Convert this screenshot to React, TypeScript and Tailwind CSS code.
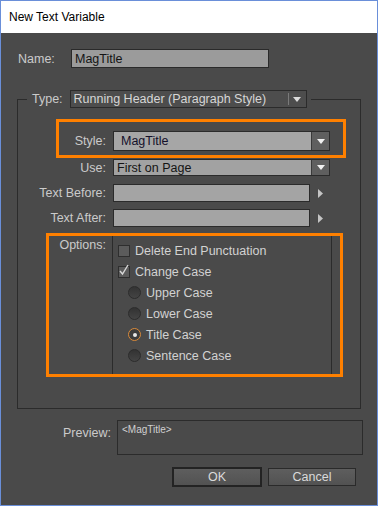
import React from 'react';

const font = { fontFamily: '"Liberation Sans", Arial, sans-serif' };

const Arrow = ({ className = '' }: { className?: string }) => (
  <svg width="8" height="5" viewBox="0 0 8 5" className={className}>
    <path d="M0 0 H8 L4 5 Z" fill="currentColor" />
  </svg>
);

const RightArrow = () => (
  <svg width="5" height="9" viewBox="0 0 5 9" className="ml-[8px] text-[#c4c4c4]">
    <path d="M0 0 L5 4.5 L0 9 Z" fill="currentColor" />
  </svg>
);

const Label = ({ children }: { children: React.ReactNode }) => (
  <div className="w-[88px] shrink-0 text-right text-[12.5px] leading-[16px] text-[#cbcbcb]">{children}</div>
);

const Checkbox = ({ checked, label }: { checked?: boolean; label: string }) => (
  <div className="flex h-[21px] items-center">
    <div className="relative h-[12px] w-[12px] border border-[#2e2e2e] bg-[#5b5b5b]">
      {checked && (
        <svg width="12" height="12" viewBox="0 0 12 12" className="absolute -left-[1px] -top-[3px]">
          <path d="M2 7 L4.5 10 L10 1" stroke="#d8d8d8" strokeWidth="1.4" fill="none" />
        </svg>
      )}
    </div>
    <span className="ml-[5px] text-[12.5px] leading-[16px] text-[#d2d2d2]">{label}</span>
  </div>
);

const Radio = ({ selected, label }: { selected?: boolean; label: string }) => (
  <div className="flex h-[21px] items-center pl-[10px]">
    <div
      className={
        selected
          ? 'flex h-[13px] w-[13px] items-center justify-center rounded-full border border-[#d98a3a] bg-[#3c3c3c]'
          : 'h-[13px] w-[13px] rounded-full border border-[#2c2c2c] bg-gradient-to-b from-[#333333] to-[#444444]'
      }
    >
      {selected && <div className="h-[4px] w-[4px] rounded-full bg-[#e8e8e8]" />}
    </div>
    <span className="ml-[5px] text-[12.5px] leading-[16px] text-[#d2d2d2]">{label}</span>
  </div>
);

export default function App() {
  return (
    <div
      className="relative flex h-[506px] w-[378px] flex-col border border-[#6a8fd9] bg-[#4a4a4a] leading-[16px]"
      style={font}
    >
      {/* title bar */}
      <div className="flex h-[32px] shrink-0 items-center bg-white pl-[8px] text-[12px] text-black">
        New Text Variable
      </div>

      <div className="flex-1 pt-[16px]">
        {/* Name */}
        <div className="flex items-center pl-[17px]">
          <div className="w-[53px] text-[12.5px] text-[#cbcbcb]">Name:</div>
          <div className="flex h-[19px] w-[198px] items-center border border-[#2a2a2a] bg-[#9b9b9b] pl-[3px] text-[12.5px] text-[#141414]">
            MagTitle
          </div>
        </div>

        {/* Type group */}
        <fieldset className="ml-[16px] mt-[22px] h-[319px] w-[344px] border border-[#2b2b2b]">
          <legend className="ml-[9px] flex items-center pl-[5px] pr-[4px]">
            <span className="mr-[7px] text-[12.5px] text-[#cbcbcb]">Type:</span>
            <div className="flex h-[18px] w-[237px] items-center border border-[#2b2b2b] bg-[#4d4d4d]">
              <span className="flex-1 pl-[3px] text-[12.5px] text-[#d6d6d6]">Running Header (Paragraph Style)</span>
              <div className="h-[12px] w-[1px] bg-[#7a7a7a]" />
              <div className="flex w-[17px] items-center justify-center text-[#dcdcdc]">
                <Arrow />
              </div>
            </div>
          </legend>

          <div className="mt-[23px] flex items-center">
            <Label>Style:</Label>
            <div className="ml-[7px] flex h-[20px] w-[217px] items-center border border-[#2b2b2b] bg-[#a6a6a6]">
              <span className="flex-1 pl-[7px] text-[12.5px] text-[#14102a]">MagTitle</span>
              <div className="flex h-full w-[18px] items-center justify-center border-l border-[#3a3a3a] bg-[#5f5f5f] text-[#f0f0f0]">
                <Arrow />
              </div>
            </div>
          </div>

          <div className="mt-[8px] flex items-center">
            <Label>Use:</Label>
            <div className="ml-[7px] flex h-[17px] w-[217px] items-center border border-[#2b2b2b] bg-[#a2a2a2]">
              <span className="flex-1 pl-[3px] text-[12.5px] text-[#141414]">First on Page</span>
              <div className="flex h-full w-[18px] items-center justify-center border-l border-[#3a3a3a] bg-[#5f5f5f] text-[#f0f0f0]">
                <Arrow />
              </div>
            </div>
          </div>

          <div className="mt-[8px] flex items-center">
            <Label>Text Before:</Label>
            <div className="ml-[7px] h-[18px] w-[197px] border border-[#2b2b2b] bg-[#a4a4a4]" />
            <RightArrow />
          </div>

          <div className="mt-[7px] flex items-center">
            <Label>Text After:</Label>
            <div className="ml-[7px] h-[18px] w-[197px] border border-[#2b2b2b] bg-[#a4a4a4]" />
            <RightArrow />
          </div>

          <div className="mt-[6px] flex items-start">
            <div className="pt-[4px]">
              <Label>Options:</Label>
            </div>
            <div className="ml-[6px] h-[143px] w-[220px] border-x border-[#2b2b2b] pl-[5px] pt-[7px]">
              <Checkbox label="Delete End Punctuation" />
              <Checkbox checked label="Change Case" />
              <Radio label="Upper Case" />
              <Radio label="Lower Case" />
              <Radio selected label="Title Case" />
              <Radio label="Sentence Case" />
            </div>
          </div>
        </fieldset>

        {/* Preview */}
        <div className="mt-[11px] flex items-start pl-[62px]">
          <div className="w-[54px] pt-[5px] text-[12.5px] text-[#cbcbcb]">Preview:</div>
          <div className="h-[35px] w-[246px] border border-[#2b2b2b] pl-[4px] pt-[2px] text-[10px] leading-[14px] text-[#d0d0d0]">
            &lt;MagTitle&gt;
          </div>
        </div>

        {/* Buttons */}
        <div className="mt-[12px] flex items-center justify-end gap-[6px] pr-[21px]">
          <button className="flex h-[20px] w-[90px] items-center justify-center border-2 border-[#232323] bg-gradient-to-b from-[#5e5e5e] to-[#525252] text-[12.5px] text-[#dadada]">
            OK
          </button>
          <button className="flex h-[18px] w-[88px] items-center justify-center border border-[#2a2a2a] bg-gradient-to-b from-[#5e5e5e] to-[#525252] text-[12.5px] text-[#dadada]">
            Cancel
          </button>
        </div>
      </div>

      {/* orange annotation boxes */}
      <div className="pointer-events-none absolute left-[55px] top-[118px] h-[39px] w-[290px] border-[3px] border-[#ff8000]" />
      <div className="pointer-events-none absolute left-[45px] top-[232px] h-[144px] w-[297px] border-[3px] border-[#ff8000]" />
    </div>
  );
}
